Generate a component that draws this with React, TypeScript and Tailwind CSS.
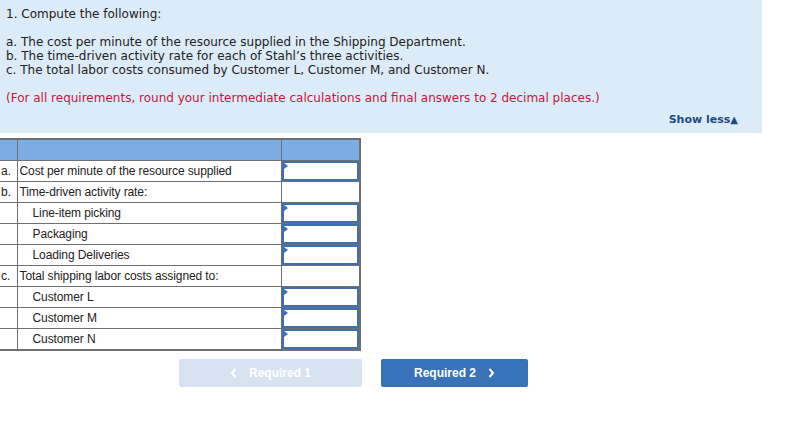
import React from 'react';

const rows: { label: string; text: string; indent?: boolean; input: boolean }[] = [
  { label: 'a.', text: 'Cost per minute of the resource supplied', input: true },
  { label: 'b.', text: 'Time-driven activity rate:', input: false },
  { label: '', text: 'Line-item picking', indent: true, input: true },
  { label: '', text: 'Packaging', indent: true, input: true },
  { label: '', text: 'Loading Deliveries', indent: true, input: true },
  { label: 'c.', text: 'Total shipping labor costs assigned to:', input: false },
  { label: '', text: 'Customer L', indent: true, input: true },
  { label: '', text: 'Customer M', indent: true, input: true },
  { label: '', text: 'Customer N', indent: true, input: true },
];

const AnswerInput = () => (
  <div className="relative h-[20px] w-full border-2 border-[#3d70b3] bg-white">
    <span className="absolute left-0 top-0 h-0 w-0 border-y-[3px] border-l-[4px] border-y-transparent border-l-[#3d70b3]" />
  </div>
);

export default function App() {
  return (
    <div className="w-[804px] h-[432px] bg-white overflow-hidden">
      {/* Question panel */}
      <div className="w-[762px] h-[133px] bg-[#dcebf8] pl-[6px] pt-[7px] font-['DejaVu_Sans',sans-serif] text-[12px] leading-[14px] text-[#222] relative">
        <p>1. Compute the following:</p>
        <p className="mt-[14px]">a. The cost per minute of the resource supplied in the Shipping Department.</p>
        <p>b. The time-driven activity rate for each of Stahl’s three activities.</p>
        <p>c. The total labor costs consumed by Customer L, Customer M, and Customer N.</p>
        <p className="mt-[14px] text-[#c0183d]">(For all requirements, round your intermediate calculations and final answers to 2 decimal places.)</p>
        <div className="absolute right-[24px] top-[113px] text-[11px] font-bold text-[#1d4a86]">
          Show less<span className="text-[10px]">▲</span>
        </div>
      </div>

      {/* Answer table */}
      <table className="mt-[5px] ml-[-4px] border-collapse border-2 border-[#6f6f6f] font-['Liberation_Sans',Arial,sans-serif] text-[12px] text-[#222]">
        <thead>
          <tr className="h-[21px] bg-[#7aaee3]">
            <th className="w-[20px] border border-[#6f6f6f] p-0" />
            <th className="w-[264px] border border-[#6f6f6f] p-0" />
            <th className="w-[79px] border border-[#6f6f6f] p-0" />
          </tr>
        </thead>
        <tbody>
          {rows.map((r, i) => (
            <tr key={i} className="h-[21px]">
              <td className="border border-[#6f6f6f] pl-[3px] pr-0 py-0 leading-[16px]">{r.label}</td>
              <td className={`border border-[#6f6f6f] py-0 leading-[16px] tracking-[-0.1px] ${r.indent ? 'pl-[15px]' : 'pl-[2px]'}`}>{r.text}</td>
              <td className="border border-[#6f6f6f] p-0">{r.input && <AnswerInput />}</td>
            </tr>
          ))}
        </tbody>
      </table>

      {/* Navigation */}
      <div className="mt-[8px] ml-[179px] flex gap-[19px] font-['Liberation_Sans',Arial,sans-serif] text-[12px] font-bold text-white">
        <button className="flex h-[28px] w-[183px] items-center justify-center gap-[12px] rounded-[2px] bg-[#d7e3f0]">
          <svg width="7" height="10" viewBox="0 0 7 10"><path d="M5.5 1 L2 5 L5.5 9" fill="none" stroke="white" strokeWidth="2" /></svg>
          <span>Required 1</span>
        </button>
        <button className="flex h-[28px] w-[147px] items-center justify-center gap-[12px] rounded-[2px] bg-[#3873b9]">
          <span>Required 2</span>
          <svg width="7" height="10" viewBox="0 0 7 10"><path d="M1.5 1 L5 5 L1.5 9" fill="none" stroke="white" strokeWidth="2" /></svg>
        </button>
      </div>
    </div>
  );
}
